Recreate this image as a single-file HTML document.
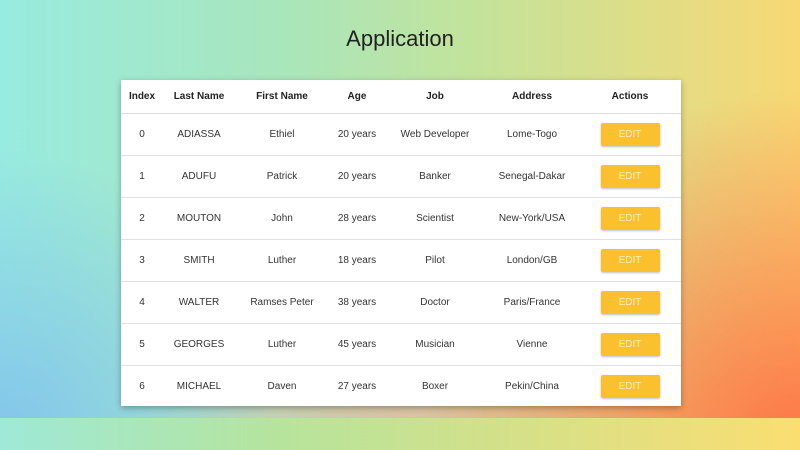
<!DOCTYPE html>
<html><head><style>
*{margin:0;padding:0;box-sizing:border-box}
body{width:800px;height:450px;overflow:hidden;font-family:"Liberation Sans",Roboto,sans-serif;position:relative;
background:
radial-gradient(ellipse 280px 300px at 0% 100%,rgba(130,195,235,1),rgba(130,195,235,0)),
radial-gradient(ellipse 380px 360px at 100% 100%,rgba(253,115,70,1),rgba(253,130,80,0)),
radial-gradient(ellipse 300px 200px at 50% 100%,rgba(240,170,160,0.7),rgba(240,170,160,0)),
linear-gradient(90deg,#98ebe0,#a8e6bc 35%,#c4e39a 60%,#f8d874);}
.strip{position:absolute;left:0;top:418px;width:800px;height:32px;background:linear-gradient(90deg,#9ee9d8,#b6e49c 35%,#d6e088 65%,#fbde72)}
h1{position:absolute;top:26px;width:100%;text-align:center;font-weight:normal;font-size:22px;color:#222}
.card{position:absolute;left:121px;top:80px;width:560px;height:326px;background:#fff;box-shadow:0 2px 6px rgba(0,0,0,.3)}
table{border-collapse:collapse;width:560px;font-size:10px;color:#333}
th{height:33px;font-weight:bold;color:#222;border-bottom:1px solid #ddd}
td{height:42px;text-align:center;border-bottom:1px solid #e0e0e0}
tr:last-child td{border-bottom:none}
.b{display:inline-block;width:59px;height:23px;line-height:23px;background:#fbc02d;color:#fff3c0;font-size:10px;border-radius:2px;box-shadow:0 1px 2px rgba(0,0,0,.25)}
</style></head><body>
<h1>Application</h1>
<div class="card"><table>
<colgroup><col style="width:42px"><col style="width:72px"><col style="width:94px"><col style="width:56px"><col style="width:100px"><col style="width:94px"><col style="width:102px"></colgroup>
<tr><th>Index</th><th>Last Name</th><th>First Name</th><th>Age</th><th>Job</th><th>Address</th><th>Actions</th></tr>
<tr><td>0</td><td>ADIASSA</td><td>Ethiel</td><td>20 years</td><td>Web Developer</td><td>Lome-Togo</td><td><span class="b">EDIT</span></td></tr>
<tr><td>1</td><td>ADUFU</td><td>Patrick</td><td>20 years</td><td>Banker</td><td>Senegal-Dakar</td><td><span class="b">EDIT</span></td></tr>
<tr><td>2</td><td>MOUTON</td><td>John</td><td>28 years</td><td>Scientist</td><td>New-York/USA</td><td><span class="b">EDIT</span></td></tr>
<tr><td>3</td><td>SMITH</td><td>Luther</td><td>18 years</td><td>Pilot</td><td>London/GB</td><td><span class="b">EDIT</span></td></tr>
<tr><td>4</td><td>WALTER</td><td>Ramses Peter</td><td>38 years</td><td>Doctor</td><td>Paris/France</td><td><span class="b">EDIT</span></td></tr>
<tr><td>5</td><td>GEORGES</td><td>Luther</td><td>45 years</td><td>Musician</td><td>Vienne</td><td><span class="b">EDIT</span></td></tr>
<tr><td>6</td><td>MICHAEL</td><td>Daven</td><td>27 years</td><td>Boxer</td><td>Pekin/China</td><td><span class="b">EDIT</span></td></tr>
</table></div>
<div class="strip"></div>
</body></html>
